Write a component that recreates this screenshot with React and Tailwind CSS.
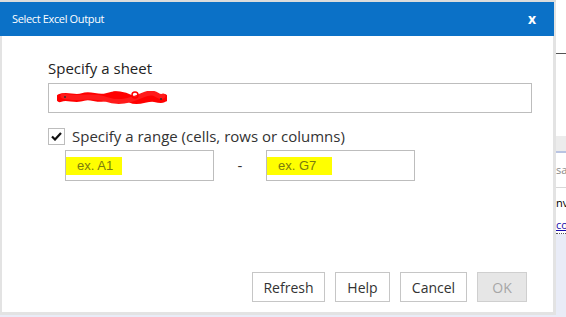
export default function App() {
  const font = { fontFamily: '"Open Sans", "Noto Sans", sans-serif' };
  const arial = { fontFamily: '"Liberation Sans", Arial, sans-serif' };
  return (
    <div className="w-[566px] h-[317px] overflow-hidden bg-[#e9ecf7] flex" style={font}>
      <div className="w-[556px] h-[315px] flex flex-col border-t-2 border-[#dcdcdc] bg-[#e3e3e3]">
        <div className="h-[34px] bg-[#0b71c7] flex items-center justify-between pl-3 pr-[18px] mr-[2px]">
          <span className="text-white text-[11px] tracking-[-0.35px] pt-[1px]">Select Excel Output</span>
          <span className="text-white text-[14px] font-bold leading-none">x</span>
        </div>
        <div className="flex-1 bg-white ml-[2px] mr-[3px] mb-[3px] pl-[46px] pr-[21px] pt-[22px] flex flex-col text-[#333]">
          <div className="text-[15px] leading-[20px] text-[#222]">Specify a sheet</div>
          <div className="mt-[5px] h-[30px] border border-[#bdbdbd] flex items-center pl-[8px]">
            <svg width="110" height="14" viewBox="0 0 110 14">
              <path d="M3 7 C10 4 18 9 26 6 S40 9 50 6 S66 4 74 8 S90 5 98 7 S104 8 107 7" stroke="#ff0000" strokeWidth="8" fill="none" strokeLinecap="round" />
              <path d="M6 5 C20 9 34 3 48 8 S72 10 86 4 S100 8 106 5" stroke="#ff1a1a" strokeWidth="5" fill="none" strokeLinecap="round" />
              <circle cx="58" cy="4" r="3" fill="none" stroke="#ff0000" strokeWidth="1.5" />
              <circle cx="78" cy="4" r="3" fill="none" stroke="#ff0000" strokeWidth="1.5" />
              <circle cx="8" cy="6" r="1" fill="#333" />
              <circle cx="104" cy="8" r="1" fill="#333" />
            </svg>
          </div>
          <div className="mt-[13px] flex items-center">
            <div className="w-[17px] h-[17px] border border-[#bdbdbd] flex items-center justify-center">
              <svg width="11" height="9" viewBox="0 0 11 9">
                <path d="M1 4.5 L4 7.5 L10 1" stroke="#111" strokeWidth="2.2" fill="none" />
              </svg>
            </div>
            <span className="ml-[7px] text-[15px] leading-[20px] text-[#333]">Specify a range (cells, rows or columns)</span>
          </div>
          <div className="mt-[4px] flex items-center pl-[17px]">
            <div className="w-[149px] h-[31px] border border-[#bdbdbd] flex items-center">
              <span className="bg-[#ffff00] text-[#7a7a10] text-[13px] h-[18px] w-[56px] pl-[11px] flex items-center" style={arial}>ex. A1</span>
            </div>
            <span className="w-[52px] text-center text-[15px] text-[#333]">-</span>
            <div className="w-[149px] h-[31px] border border-[#bdbdbd] flex items-center">
              <span className="bg-[#ffff00] text-[#7a7a10] text-[13px] h-[18px] w-[65px] pl-[11px] flex items-center" style={arial}>ex. G7</span>
            </div>
          </div>
          <div className="mt-auto mb-[10px] flex justify-end gap-[10px] text-[14px] mr-[5px]">
            <button className="w-[73px] h-[30px] border border-[#c6c6c6] text-[#333] bg-white">Refresh</button>
            <button className="w-[55px] h-[30px] border border-[#c6c6c6] text-[#333] bg-white">Help</button>
            <button className="w-[67px] h-[30px] border border-[#c6c6c6] text-[#333] bg-white">Cancel</button>
            <button className="w-[50px] h-[30px] border border-[#cfcfcf] text-[#a6a6a6] bg-[#e6e6e6]">OK</button>
          </div>
        </div>
      </div>
      <div className="flex-1 flex flex-col text-[12px] overflow-hidden">
        <div className="h-[54px] bg-white border-b border-[#555]" />
        <div className="h-[82px] bg-white" />
        <div className="h-[17px] bg-[#ececec] border-b-2 border-[#b9c4e2]" />
        <div className="h-[35px] bg-white border-b border-[#d8d8d8] flex items-center text-[#888] text-[11px]">sa</div>
        <div className="h-[30px] bg-white flex items-center text-black text-[11px]">nv</div>
        <div className="h-[16px] bg-white text-[#1a0dab] underline leading-[14px] text-[11px] border-b border-dotted border-[#555]">co</div>
        <div className="flex-1 bg-[#e9ecf7]" />
      </div>
    </div>
  );
}
